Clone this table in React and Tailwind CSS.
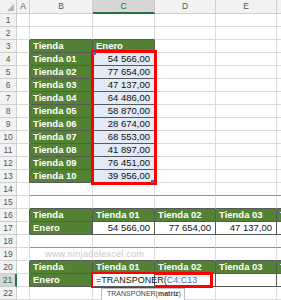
import React from 'react';

// Excel-like sheet: TRANSPONER example
const COLS = ['A', 'B', 'C', 'D', 'E', 'F'];
const VALUES = ['54 566,00', '77 654,00', '47 137,00', '64 486,00', '58 870,00', '28 674,00', '68 553,00', '41 897,00', '76 451,00', '39 956,00'];
const ROWS = Array.from({ length: 22 }, (_, i) => i + 1);

const cellAt = (r, c) => {
  const idx = COLS.indexOf(c);
  if (r === 3 && c === 'B') return { kind: 'head', text: 'Tienda' };
  if (r === 3 && c === 'C') return { kind: 'head', text: 'Enero' };
  if (r >= 4 && r <= 13 && c === 'B') return { kind: 'head', text: `Tienda ${String(r - 3).padStart(2, '0')}` };
  if (r >= 4 && r <= 13 && c === 'C') return { kind: 'ref', text: VALUES[r - 4] };
  if ((r === 16 || r === 20) && c !== 'A') return { kind: 'head', text: c === 'B' ? 'Tienda' : `Tienda 0${idx - 1}` };
  if ((r === 17 || r === 21) && c === 'B') return { kind: 'head', text: 'Enero' };
  if (r === 17 && c !== 'A') return { kind: 'val', text: VALUES[idx - 2] };
  if (r === 21 && c !== 'A') return { kind: c === 'C' ? 'formula' : 'val', text: '' };
  return null;
};

const inTable = (r, c) => !!cellAt(r, c);

const Cell = ({ r, c }) => {
  const cell = cellAt(r, c);
  const next = COLS[COLS.indexOf(c) + 1];
  const darkRight = inTable(r, c) || (next && inTable(r, next));
  const darkBottom = inTable(r, c) || inTable(r + 1, c);
  const frameBottom = (r === 14 || r === 18) && c !== 'A';

  let fill = 'bg-white';
  let text = 'overflow-hidden';
  if (cell?.kind === 'head') { fill = 'bg-[#548235]'; text = 'overflow-hidden text-white font-bold justify-start pl-[3px]'; }
  if (cell?.kind === 'ref') { fill = 'bg-[#e2eaf6]'; text = 'overflow-hidden text-[#111] justify-end pr-[4px]'; }
  if (cell?.kind === 'val') { text = 'overflow-hidden text-[#111] justify-end pr-[4px]'; }
  if (cell?.kind === 'formula') { text = 'relative z-10 overflow-visible text-[#111] justify-start pl-[3px]'; }

  return (
    <div
      className={`flex items-center whitespace-nowrap border-r border-b text-[9.5px] leading-none ${fill} ${text} ${
        darkRight ? 'border-r-[#595959]' : 'border-r-[#dcdcdc]'
      } ${darkBottom ? 'border-b-[#595959]' : frameBottom ? 'border-b-[#8f8f8f]' : 'border-b-[#dcdcdc]'}`}
    >
      {cell?.kind === 'formula' ? (
        <span className="text-[9px]">
          =TRANSPONER(<span className="text-[#3a6fd8]">C4:C13</span>
        </span>
      ) : (
        cell?.text
      )}
    </div>
  );
};

export default function App() {
  return (
    <div className="relative w-[281px] h-[300px] overflow-hidden bg-white font-['Liberation_Sans',Arial,sans-serif]">
      <div className="grid grid-cols-[17px_13px_63px_62px_61px_61px_61px] grid-rows-[14px_repeat(22,13px)]">
        {/* corner */}
        <div className="relative bg-[#f2f2f2] border-r border-b border-[#cfcfcf]">
          <svg className="absolute right-[2px] bottom-[2px]" width="7" height="7" viewBox="0 0 7 7">
            <path d="M7 0 L7 7 L0 7 Z" fill="#b4b4b4" />
          </svg>
        </div>
        {COLS.map((c) => (
          <div
            key={c}
            className={`flex items-center justify-center text-[8.5px] border-r ${
              c === 'C'
                ? 'bg-[#d6d6d6] text-[#217346] border-b-2 border-b-[#217346] border-r-[#c6c6c6]'
                : 'bg-[#f2f2f2] text-[#555] border-b border-[#cfcfcf]'
            }`}
          >
            {c}
          </div>
        ))}

        {ROWS.map((r) => (
          <React.Fragment key={r}>
            <div
              className={`flex items-center justify-center text-[8.5px] border-b ${
                r === 21
                  ? 'bg-[#d6d6d6] text-[#217346] border-r-2 border-r-[#217346] border-b-[#c6c6c6]'
                  : 'bg-[#f2f2f2] text-[#555] border-r border-[#cfcfcf]'
              }`}
            >
              {r}
            </div>
            {COLS.map((c) => (
              <Cell key={c} r={r} c={c} />
            ))}
          </React.Fragment>
        ))}
      </div>

      {/* referenced range highlight */}
      <div className="absolute left-[91px] top-[50px] w-[66px] h-[135px] border-[3px] border-[#ff0000]" />
      <div className="absolute left-[93px] top-[52px] w-[3px] h-[3px] bg-[#3a6fd8]" />
      <div className="absolute left-[151px] top-[180px] w-[3px] h-[3px] bg-[#3a6fd8]" />

      {/* watermark */}
      <div className="absolute left-[45px] top-[249px] text-[9px] leading-[11px] tracking-[0.3px] text-[#c8c8c8]">
        www.ninjadelexcel.com
      </div>

      {/* editing cell outline */}
      <div className="absolute left-[91px] top-[272px] w-[122px] h-[16px] border-[3px] border-[#ff0000]" />

      {/* function tooltip */}
      <div className="absolute left-[101px] top-[288px] w-[84px] h-[13px] bg-white border border-[#bdbdbd] flex items-center pl-[5px] text-[7px] text-[#444] whitespace-nowrap">
        TRANSPONER(<span className="font-bold">matriz</span>)
      </div>
    </div>
  );
}
